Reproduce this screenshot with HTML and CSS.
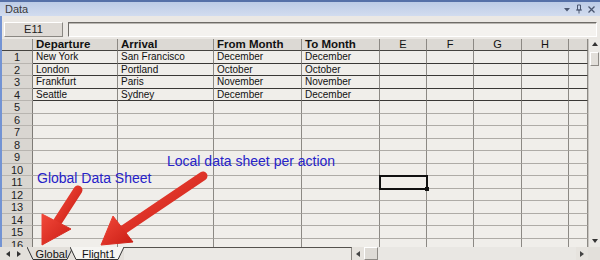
FILE: index.html
```html
<!DOCTYPE html>
<html>
  <head>
    <meta charset="utf-8">
    <link rel="stylesheet" href="styles.css">
  </head>
  <body>
    <div class="window">
      <div class="titlebar">
        <span class="title">Data</span>
        <div class="title-icons">
          <svg width="8" height="8" viewBox="0 0 8 8"><path d="M1 3h6L4 6.5z" fill="#4a5670"/></svg>
          <svg width="8" height="10" viewBox="0 0 8 10"><path d="M2.5 1h3v5h-3z M1 6h6 M4 6v3.5" fill="none" stroke="#4a5670" stroke-width="1"/></svg>
          <svg width="9" height="9" viewBox="0 0 9 9"><path d="M1.5 1.5l6 6M7.5 1.5l-6 6" stroke="#4a5670" stroke-width="1.3"/></svg>
        </div>
      </div>
      <div class="formula">
        <div class="namebox">E11</div>
        <div class="formula-input"></div>
      </div>
      <div class="sheet">
        <div class="grid" id="grid"></div>
        <div class="vscroll">
          <svg class="vs-up" width="6" height="4" viewBox="0 0 6 4"><path d="M0 4L3 0L6 4z" fill="#333"/></svg>
          <div class="vs-thumb"></div>
          <svg class="vs-down" width="6" height="4" viewBox="0 0 6 4"><path d="M0 0L3 4L6 0z" fill="#333"/></svg>
        </div>
        <div class="note note-local">Local data sheet per action</div>
        <div class="note note-global">Global Data Sheet</div>
      </div>
      <div class="tabbar">
        <div class="tab-nav">
          <svg width="4" height="6" viewBox="0 0 4 6"><path d="M4 0L0 3L4 6z" fill="#333"/></svg>
          <svg width="4" height="6" viewBox="0 0 4 6"><path d="M0 0L4 3L0 6z" fill="#333"/></svg>
        </div>
        <div class="tab">
          <svg class="tab-shape" width="46" height="13" viewBox="0 0 46 13"><path d="M0 0L6 12.5H40L46 0" fill="#e3e0db" stroke="#333"/></svg>
          <span>Global</span>
        </div>
        <div class="tab tab-active">
          <svg class="tab-shape" width="54" height="13" viewBox="0 0 54 13"><path d="M0 0L6 12.5H48L54 0" fill="#f6f5f2" stroke="#333"/></svg>
          <span>Flight1</span>
        </div>
        <div class="tab-split"></div>
        <div class="hs-btn">
          <svg width="4" height="6" viewBox="0 0 4 6"><path d="M4 0L0 3L4 6z" fill="#444"/></svg>
        </div>
        <div class="hs-thumb"></div>
        <div class="hs-track"></div>
        <div class="hs-btn">
          <svg width="4" height="6" viewBox="0 0 4 6"><path d="M0 0L4 3L0 6z" fill="#444"/></svg>
        </div>
        <div class="hs-corner"></div>
      </div>
      <svg class="arrows" width="600" height="260" viewBox="0 0 600 260">
        <defs>
          <linearGradient id="red" x1="0" y1="0" x2="1" y2="1">
            <stop offset="0" stop-color="#f2483a"/>
            <stop offset="1" stop-color="#c91d14"/>
          </linearGradient>
        </defs>
        <g fill="url(#red)" stroke="url(#red)">
          <line x1="78" y1="190" x2="58" y2="221" stroke-width="9" stroke-linecap="round"/>
          <path d="M42 214L71 229L42 245z" stroke-width="1" stroke-linejoin="round"/>
          <line x1="203" y1="176" x2="123" y2="230" stroke-width="9" stroke-linecap="round"/>
          <path d="M113 216L133 242L101 245z" stroke-width="1" stroke-linejoin="round"/>
        </g>
      </svg>
    </div>
    <script>
      // Build the data table grid
      const grid = document.getElementById('grid');
      const cols = ['', 'Departure', 'Arrival', 'From Month', 'To Month', 'E', 'F', 'G', 'H', ''];
      const data = [
        ['New York', 'San Francisco', 'December', 'December'],
        ['London', 'Portland', 'October', 'October'],
        ['Frankfurt', 'Paris', 'November', 'November'],
        ['Seattle', 'Sydney', 'December', 'December']
      ];
      let html = '';
      cols.forEach((c, i) => {
        const cls = i === 0 ? 'corner' : i > 4 ? 'letter' : '';
        html += `<div class="cell head ${cls}">${c}</div>`;
      });
      for (let r = 1; r <= 16; r++) {
        const rowCls = r <= 4 ? 'filled' : '';
        html += `<div class="cell rowhead ${rowCls}">${r}</div>`;
        for (let c = 1; c < cols.length; c++) {
          const text = r <= 4 && c <= 4 ? data[r - 1][c - 1] : '';
          const sel = r === 11 && c === 5 ? 'selected' : '';
          html += `<div class="cell ${rowCls} ${sel}">${text}</div>`;
        }
      }
      grid.innerHTML = html;
    </script>
  </body>
</html>
```

FILE: styles.css
```css
/* Page reset */
body {
  margin: 0;
  font-family: "Liberation Sans", Arial, sans-serif;
  background: #ebe8e4;
}
.window {
  position: relative;
  width: 600px;
  height: 260px;
  overflow: hidden;
  display: flex;
  flex-direction: column;
  background: #ebe8e4;
}

/* Title bar */
.titlebar {
  height: 16px;
  box-sizing: border-box;
  border-top: 2px solid #5570a8;
  background: linear-gradient(#bccbe6, #d2dcef);
  display: flex;
  align-items: center;
  justify-content: space-between;
  padding: 0 4px 0 5px;
}
.titlebar .title {
  font-size: 11px;
  color: #3a3a3a;
}
.title-icons {
  display: flex;
  align-items: center;
  gap: 4px;
}

/* Formula bar */
.formula {
  height: 23px;
  box-sizing: border-box;
  border-left: 2px solid #7393d3;
  display: flex;
  align-items: flex-end;
  padding: 0 3px 2px 2px;
  gap: 5px;
}
.namebox {
  width: 59px;
  height: 15px;
  box-sizing: border-box;
  background: #dedad5;
  border: 1px solid;
  border-color: #fff #8a8782 #8a8782 #fff;
  font-size: 11px;
  line-height: 13px;
  text-align: center;
  color: #222;
}
.formula-input {
  flex: 1;
  height: 15px;
  box-sizing: border-box;
  background: #f4f2ef;
  border: 1px solid;
  border-color: #6e6b67 #fff #fff #6e6b67;
  box-shadow: inset 0 1px 0 #b8b5b0;
}

/* Sheet area */
.sheet {
  position: relative;
  height: 208px;
  display: flex;
  border-left: 2px solid #7393d3;
  overflow: hidden;
}
.grid {
  display: grid;
  grid-template-columns: 31px 85px 96px 88px 78px 47px 47px 48px 47px 19px;
  grid-template-rows: 12px;
  grid-auto-rows: 12.5px;
  align-content: start;
  background: #f0eeea;
}
.cell {
  box-sizing: border-box;
  border-right: 1px solid #8c8984;
  border-bottom: 1px solid #aeaba6;
  font-size: 10px;
  line-height: 12px;
  padding-left: 3px;
  white-space: nowrap;
  overflow: hidden;
  color: #111;
}
.cell.filled {
  border-bottom-color: #3a3835;
}
.cell.head {
  background: #dcd9d4;
  border-bottom: 1px solid #45433f;
  font-weight: bold;
  font-size: 11.5px;
  line-height: 11px;
}
.cell.head.letter,
.cell.head.corner {
  font-weight: normal;
  font-size: 11px;
  text-align: center;
  padding-left: 0;
}
.cell.rowhead {
  background: #d9d6d1;
  border-bottom-color: #b8b5b0;
  border-right-color: #7e7b76;
  text-align: center;
  padding-left: 0;
  font-size: 11px;
  color: #222;
}
.cell.selected {
  position: relative;
  overflow: visible;
  outline: 2px solid #111;
  outline-offset: -1px;
}
.cell.selected::after {
  content: '';
  position: absolute;
  right: -3px;
  bottom: -3px;
  width: 4px;
  height: 4px;
  background: #111;
}

/* Vertical scrollbar */
.vscroll {
  flex: 1;
  box-sizing: border-box;
  background: #ebe9e5;
  border-left: 1px solid #c8c5c0;
  display: flex;
  flex-direction: column;
  align-items: center;
  padding: 3px 0 4px;
}
.vs-thumb {
  width: 9px;
  height: 14px;
  margin-top: 6px;
  box-sizing: border-box;
  background: #e2dfda;
  border: 1px solid;
  border-color: #fff #8e8b86 #8e8b86 #fff;
}
.vs-down {
  margin-top: auto;
}

/* Annotations */
.note {
  position: absolute;
  font-size: 14px;
  line-height: 16px;
  color: #2622c8;
  white-space: nowrap;
}
.note-local {
  left: 165px;
  top: 114px;
}
.note-global {
  left: 35px;
  top: 131px;
}

/* Sheet tabs + horizontal scrollbar */
.tabbar {
  height: 13px;
  display: flex;
  align-items: stretch;
  background: #e3e0db;
  font-size: 11px;
  line-height: 12px;
}
.tab-nav {
  width: 27px;
  display: flex;
  align-items: center;
  justify-content: space-around;
  padding: 0 2px;
  box-sizing: border-box;
}
.tab {
  position: relative;
  display: flex;
  align-items: center;
  justify-content: center;
  width: 46px;
  padding-left: 3px;
  box-sizing: border-box;
  color: #111;
}
.tab span {
  position: relative;
}
.tab-active {
  width: 54px;
  margin-left: -3px;
}
.tab-shape {
  position: absolute;
  left: 0;
  top: 0;
}
.tab-split {
  width: 228px;
  box-sizing: border-box;
  border-top: 1px solid #55524e;
  border-right: 1px solid #8a8782;
  background: #ebe9e5;
}
.hs-btn {
  width: 12px;
  display: flex;
  align-items: center;
  justify-content: center;
  background: #e6e3de;
}
.hs-thumb {
  width: 14px;
  box-sizing: border-box;
  background: #dedbd6;
  border: 1px solid;
  border-color: #fff #8e8b86 #8e8b86 #fff;
}
.hs-track {
  flex: 1;
  background: #e9e7e3;
}
.hs-corner {
  width: 12px;
  background: #e3e0db;
}

/* Red callout arrows */
.arrows {
  position: absolute;
  left: 0;
  top: 0;
  pointer-events: none;
}
```
